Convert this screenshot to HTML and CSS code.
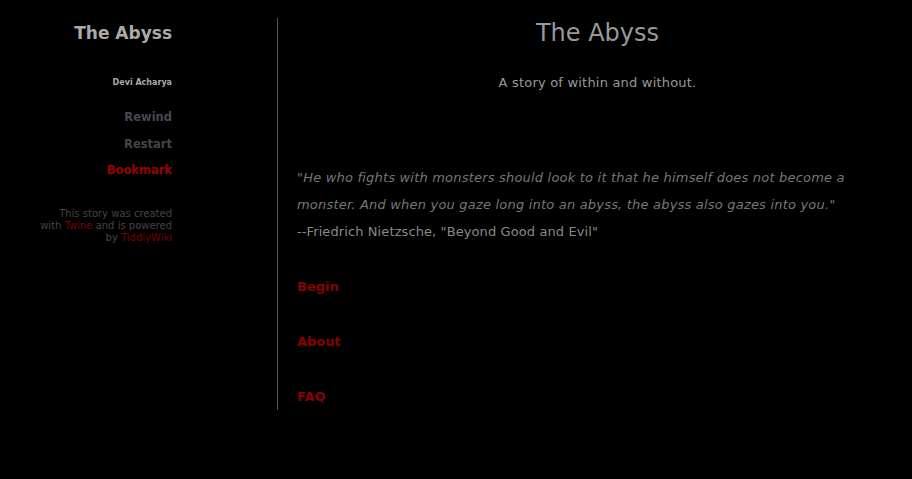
FILE: index.html
```html
<!DOCTYPE html>
<html lang="en">
<head>
  <meta charset="UTF-8">
  <title>The Abyss</title>
  <link rel="stylesheet" href="styles.css">
</head>
<body>
  <div class="story">
    <!-- sidebar with title, author and menu -->
    <aside class="sidebar">
      <h1 class="story-title">The Abyss</h1>
      <p class="author">Devi Acharya</p>
      <ul class="menu">
        <li><a href="#" class="rewind">Rewind</a></li>
        <li><a href="#" class="restart">Restart</a></li>
        <li><a href="#" class="bookmark">Bookmark</a></li>
      </ul>
      <p class="credits">This story was created<br>with <a href="#">Twine</a> and is powered<br>by <a href="#">TiddlyWiki</a></p>
    </aside>

    <!-- passage area -->
    <main class="passages">
      <h2 class="title">The Abyss</h2>
      <p class="subtitle">A story of within and without.</p>
      <p class="quote"><em>"He who fights with monsters should look to it that he himself does not become a monster. And when you gaze long into an abyss, the abyss also gazes into you."</em><br>--Friedrich Nietzsche, "Beyond Good and Evil"</p>
      <ul class="links">
        <li><a href="#">Begin</a></li>
        <li><a href="#">About</a></li>
        <li><a href="#">FAQ</a></li>
      </ul>
    </main>
  </div>
</body>
</html>
```

FILE: styles.css
```css
/* page base */
body {
  margin: 0;
  background-color: #000;
  color: #999;
  font-family: "DejaVu Sans", Verdana, sans-serif;
}

a {
  text-decoration: none;
}

.story {
  display: flex;
  align-items: flex-start;
  padding-top: 18px;
}

/* sidebar */
.sidebar {
  width: 172px;
  text-align: right;
}

.story-title {
  margin: 5px 0 0;
  font-size: 17px;
  line-height: 20px;
  color: #aaa;
}

.author {
  margin: 34px 0 0;
  font-size: 8px;
  line-height: 11px;
  font-weight: bold;
  color: #aaa;
}

.menu {
  list-style: none;
  margin: 16px 0 0;
  padding: 0;
}

.menu li {
  line-height: 26.5px;
  font-size: 11.5px;
  font-weight: bold;
}

.rewind {
  color: #454856;
}

.restart {
  color: #454545;
}

.bookmark {
  color: #990000;
}

.credits {
  margin: 24px 0 0;
  font-size: 10px;
  line-height: 12px;
  color: #444;
}

.credits a {
  color: #700;
}

/* main passage column */
.passages {
  margin-left: 105px;
  border-left: 1px solid #555;
  padding: 0 0 4px 19px;
  width: 601px;
}

.title {
  margin: 0;
  text-align: center;
  font-size: 24px;
  font-weight: normal;
  line-height: 30px;
  color: #999;
}

.subtitle {
  margin: 27px 0 0;
  text-align: center;
  font-size: 13px;
  letter-spacing: 0.2px;
  color: #999;
}

.quote {
  margin: 74px 0 0;
  font-size: 13px;
  line-height: 27px;
  letter-spacing: 0.1px;
  color: #888;
}

.quote em {
  letter-spacing: 0.2px;
  color: #777;
}

.links {
  list-style: none;
  margin: 33px 0 0;
  padding: 0;
}

.links li {
  font-size: 13px;
  font-weight: bold;
  line-height: 18px;
  margin-bottom: 37px;
}

.links li:last-child {
  margin-bottom: 0;
}

.links a {
  color: #800;
}
```
